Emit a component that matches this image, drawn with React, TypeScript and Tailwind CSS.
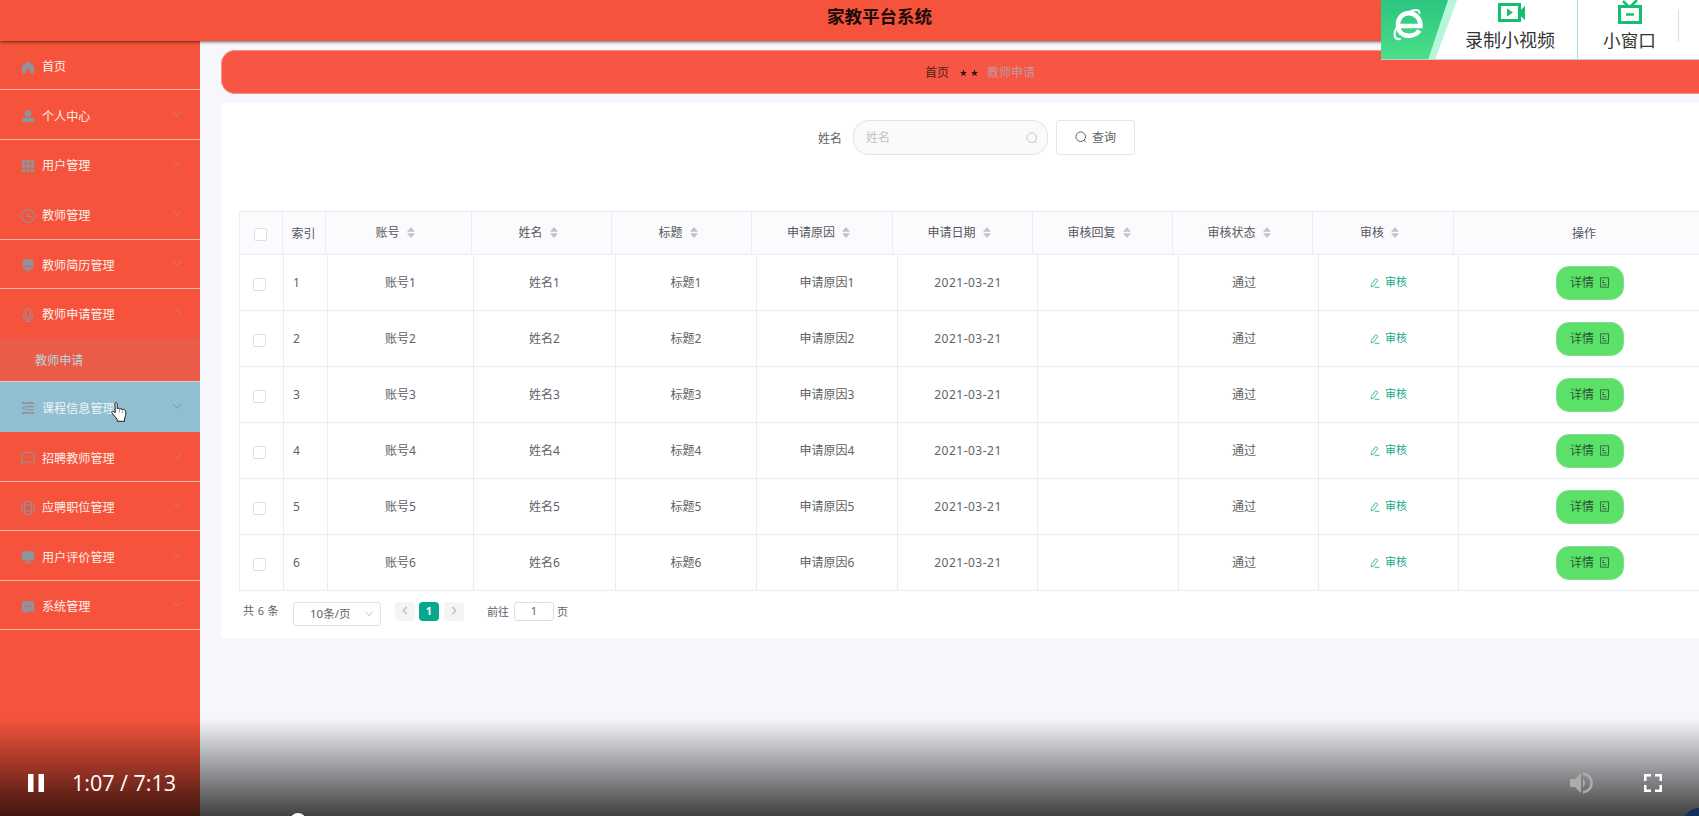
import type { ReactNode } from "react";
import clsx from "clsx";

type MenuItem = {
  label: string;
  icon: ReactNode;
  height: string;
  line?: boolean;
  arrow?: "down" | "up";
  active?: boolean;
};

const icons = {
  home: <path fill="currentColor" d="M8 1 1 7v8h5v-5h4v5h5V7z" />,
  user: (
    <path fill="currentColor" d="M8 1a4 4 0 1 1 0 8 4 4 0 0 1 0-8zM1 15v-2q0-3 3-3h8q3 0 3 3v2z" />
  ),
  grid: (
    <path
      fill="currentColor"
      d="M1 1h4v4H1zM6 1h4v4H6zM11 1h4v4h-4zM1 6h4v4H1zM6 6h4v4H6zM11 6h4v4h-4zM1 11h4v4H1zM6 11h4v4H6zM11 11h4v4h-4z"
    />
  ),
  clock: (
    <g fill="none" stroke="currentColor" strokeWidth="1.2">
      <circle cx="8" cy="8" r="7.4" />
      <path d="M7.5 4v4.5H12" />
    </g>
  ),
  brush: <path fill="currentColor" d="M2 .5h12V8H2zM2 9h12v3h-4L8 15.500 6 12H2z" />,
  mic: (
    <g fill="none" stroke="currentColor" strokeWidth="1.2">
      <rect x="5" y=".8" width="6" height="10" rx="3" />
      <path d="M3 6v3c0 6 10 6 10 0V6M8 13.500v2M5 15.400h6" />
    </g>
  ),
  fold: (
    <path
      fill="currentColor"
      d="M1 1.500h14v2H1zM6 5.500h9v1.500H6zM6 9h9v1.500H6zM1 12.500h14v2H1zM1 8l3.500-2.500v5z"
    />
  ),
  chat: (
    <g fill="none" stroke="currentColor" strokeWidth="1.2">
      <path d="M1 1.800h14v11H4.500L1 15z" />
      <path strokeDasharray="1.500 1.500" d="M4.500 7.200h7.500" />
    </g>
  ),
  help: (
    <g fill="none" stroke="currentColor" strokeWidth="1.2">
      <circle cx="8" cy="8" r="7.4" />
      <circle cx="8" cy="8" r="4.200" />
      <path d="M4 2v4M12 2v4M4 14v-4M12 14v-4" />
    </g>
  ),
  screen: <path fill="currentColor" d="M1 1.500h14v10.500H1zM7 12h2v2h3v1H4v-1h3z" />,
  message: (
    <path
      fill="currentColor"
      fillRule="evenodd"
      d="M1 1.500h14V13H8l-3.500 2.500V13H1zM4 6.500v1.500h1.500V6.500zM7.200 6.500v1.500h1.500V6.500zM10.500 6.500v1.500H12V6.500z"
    />
  ),
};

const menu: MenuItem[] = [
  { label: "首页", icon: icons.home, height: "h-[49px]", line: true },
  { label: "个人中心", icon: icons.user, height: "h-[50px]", line: true, arrow: "down" },
  { label: "用户管理", icon: icons.grid, height: "h-[49px]", arrow: "down" },
  { label: "教师管理", icon: icons.clock, height: "h-[51px]", line: true, arrow: "down" },
  { label: "教师简历管理", icon: icons.brush, height: "h-[49px]", line: true, arrow: "down" },
  { label: "教师申请管理", icon: icons.mic, height: "h-[49px]", arrow: "up" },
];

const menuAfter: MenuItem[] = [
  { label: "课程信息管理", icon: icons.fold, height: "h-[50px]", arrow: "down", active: true },
  { label: "招聘教师管理", icon: icons.chat, height: "h-[50px]", line: true, arrow: "down" },
  { label: "应聘职位管理", icon: icons.help, height: "h-[49px]", line: true, arrow: "down" },
  { label: "用户评价管理", icon: icons.screen, height: "h-[50px]", line: true, arrow: "down" },
  { label: "系统管理", icon: icons.message, height: "h-[49px]", line: true, arrow: "down" },
];

const columns = [
  { label: "账号", head: "w-[146px]" },
  { label: "姓名", head: "w-[140px]" },
  { label: "标题", head: "w-[140px]" },
  { label: "申请原因", head: "w-[141px]" },
  { label: "申请日期", head: "w-[140px]" },
  { label: "审核回复", head: "w-[140px]" },
  { label: "审核状态", head: "w-[140px]" },
  { label: "审核", head: "w-[141px]" },
];

const rows = [1, 2, 3, 4, 5, 6];

function SideItem({ item }: { item: MenuItem }) {
  return (
    <li
      className={clsx(
        "flex shrink-0 items-center border-b pl-[21px] pr-[18px]",
        item.height,
        item.line ? "border-[#fbb5a8]" : "border-transparent",
        item.active ? "bg-[#8fbfd0] text-[#eef4f7]" : "text-[#fff0ea]",
      )}
    >
      <svg viewBox="0 0 16 16" className="mt-[3px] size-3.5 text-[#909399]">
        {item.icon}
      </svg>
      <span className="ml-[7px] mt-1 text-[12.1px] leading-4">{item.label}</span>
      {item.arrow ? (
        <svg
          viewBox="0 0 10 6"
          className={clsx("-mt-0.5 ml-auto h-1.5 w-2.5", item.arrow === "up" && "rotate-180")}
        >
          <path
            d="M.7.8 5 5 9.300.8"
            fill="none"
            className={item.active ? "stroke-[#8296a2]" : "stroke-[#c08079]"}
          />
        </svg>
      ) : null}
    </li>
  );
}

function SearchIcon({ className }: { className: string }) {
  return (
    <svg viewBox="0 0 12 12" className={className} fill="none" stroke="currentColor">
      <circle cx="5.700" cy="5.700" r="4.800" />
      <path d="m9 9.200 2 2" />
    </svg>
  );
}

function SortIcon() {
  return (
    <svg viewBox="0 0 8 11" className="-mt-0.5 ml-[7px] h-[11px] w-2 fill-[#c0c4cc]">
      <path d="M4 0 8 4.800H0zM4 11 0 6.200h8z" />
    </svg>
  );
}

function Checkbox({ className }: { className?: string }) {
  return (
    <span className={clsx("block size-[13px] rounded-[2px] border border-[#dcdfe6] bg-white", className)} />
  );
}

function Cell({ width, children }: { width: string; children?: ReactNode }) {
  return (
    <div className={clsx("flex h-full shrink-0 items-center justify-center border-r border-[#ebebf4]", width)}>
      {children}
    </div>
  );
}

function Sidebar() {
  return (
    <aside className="w-[200px] shrink-0 bg-[#f5533b]">
      <ul className="flex flex-col">
        {menu.map((item) => (
          <SideItem key={item.label} item={item} />
        ))}
        <li className="flex h-11 items-center border-b border-[#f3c6bb] bg-[#ea5c48] pl-[35px] pt-[3px] text-[12.1px] text-[#b4d8dc]">
          教师申请
        </li>
        {menuAfter.map((item) => (
          <SideItem key={item.label} item={item} />
        ))}
      </ul>
    </aside>
  );
}

function SearchBar() {
  return (
    <div className="flex h-[35px] items-center pl-[597px] text-xs text-[#606266]">
      <span className="mt-0.5 w-[35px]">姓名</span>
      <div className="flex h-[35px] w-[195px] items-center justify-between rounded-[15px] border border-[#e2e2e4] bg-[#fafafa] pl-3 pr-[9px] text-[#c0c4cc]">
        <span>姓名</span>
        <SearchIcon className="size-3" />
      </div>
      <button
        type="button"
        className="ml-2 flex h-[35px] w-[79px] items-center justify-center rounded-[3px] border border-[#e4e4ec] bg-white"
      >
        <SearchIcon className="-mt-0.5 mr-[5px] size-3" />
        查询
      </button>
    </div>
  );
}

function ApplyTable() {
  return (
    <div className="w-[1484px] border-l border-[#ebebf4] text-xs text-[#606266]">
      <div className="flex h-11 w-[1484px] border-y border-[#ebebf4] bg-[#fbfbfd] text-[#55575c]">
        <Cell width="w-[43px]">
          <Checkbox className="-ml-px mt-0.5" />
        </Cell>
        <Cell width="w-[43px]">
          <span className="-ml-px mt-0.5">索引</span>
        </Cell>
        {columns.map((col) => (
          <Cell key={col.label} width={col.head}>
            <span className="-ml-[7px]">{col.label}</span>
            <SortIcon />
          </Cell>
        ))}
        <Cell width="w-[262px]">
          <span className="-ml-px mt-0.5">操作</span>
        </Cell>
      </div>
      {rows.map((n) => (
        <div key={n} className="flex h-14 border-b border-[#ebebf4]">
          <Cell width="w-[44px]">
            <Checkbox className="-ml-1 mt-[3px]" />
          </Cell>
          <div className="flex w-[44px] shrink-0 items-center border-r border-[#ebebf4] pl-[9px]">{n}</div>
          <Cell width="w-[146px]">账号{n}</Cell>
          <Cell width="w-[142px]">姓名{n}</Cell>
          <Cell width="w-[141px]">标题{n}</Cell>
          <Cell width="w-[141px]">申请原因{n}</Cell>
          <Cell width="w-[140px]">
            <span className="ml-px tracking-[0.5px]">2021-03-21</span>
          </Cell>
          <Cell width="w-[141px]" />
          <Cell width="w-[140px]">
            <span className="-ml-[9px]">通过</span>
          </Cell>
          <Cell width="w-[140px]">
            <svg
              viewBox="0 0 11 11"
              className="mr-[5px] size-2.5 text-[#2fb39c]"
              fill="none"
              stroke="currentColor"
            >
              <path d="M6.200.8 8.600 2.500 4.200 8.800 1.300 10l.4-3zM5 10.200h5.500" />
            </svg>
            <span className="text-[11px] text-[#16a68d]">审核</span>
          </Cell>
          <Cell width="w-[263px]">
            <button
              type="button"
              className="flex h-[34px] w-[68px] items-center justify-center rounded-[13px] border border-[#83dd8e] bg-[#5be069] text-[#29562f]"
            >
              <span className="-ml-px">详情</span>
              <svg viewBox="0 0 10 12" className="ml-1.5 h-[11px] w-[9px]" fill="none" stroke="currentColor">
                <path d="M.5.800h9v10.400h-9zM2.500 4h2M2.500 6h3M2.500 8.500h5" strokeWidth=".9" />
              </svg>
            </button>
          </Cell>
        </div>
      ))}
    </div>
  );
}

function Pagination() {
  return (
    <div className="mt-[11px] flex items-start pl-1 text-[11px] text-[#606266]">
      <span className="w-[50px] whitespace-nowrap leading-[18px] tracking-[0.4px]">共 6 条</span>
      <div className="flex h-6 w-[88px] items-center justify-between rounded-[3px] border border-[#dfe1e8] pl-4 pr-[7px] text-[11.5px]">
        <span>10条/页</span>
        <svg viewBox="0 0 8 6" className="h-1.5 w-2 stroke-[#c0c4cc]" fill="none">
          <path d="m.5.800 3.500 4 3.500-4" />
        </svg>
      </div>
      <span className="ml-3.5 flex h-[19px] w-5 items-center justify-center rounded-sm bg-[#f4f4f5]">
        <svg viewBox="0 0 6 10" className="-mt-0.5 h-[9px] w-1.5 stroke-[#b4b8c0]" fill="none" strokeWidth="1.300">
          <path d="M5 1 1 5l4 4" />
        </svg>
      </span>
      <span className="ml-1 flex h-[19px] w-5 items-center justify-center rounded-sm bg-[#04a98b] font-bold text-white">
        1
      </span>
      <span className="ml-[5px] flex h-[19px] w-5 items-center justify-center rounded-sm bg-[#f4f4f5]">
        <svg viewBox="0 0 6 10" className="-mt-0.5 h-[9px] w-1.5 stroke-[#b4b8c0]" fill="none" strokeWidth="1.300">
          <path d="m1 1 4 4-4 4" />
        </svg>
      </span>
      <span className="ml-[23px] w-[27px] leading-[19px]">前往</span>
      <span className="flex h-[19px] w-10 items-center justify-center rounded-[3px] border border-[#dcdfe6]">1</span>
      <span className="ml-[3px] leading-[19px]">页</span>
    </div>
  );
}

function RecorderBar() {
  return (
    <div className="absolute right-0 top-0 z-20 flex h-[60px] w-[318px] overflow-hidden border-b border-[#c9cdd0] bg-white text-[#333]">
      <svg viewBox="0 0 76 60" className="h-[60px] w-[76px] shrink-0">
        <defs>
          <linearGradient id="rec" x1="0" y1="0" x2="0" y2="1">
            <stop offset="0" stopColor="#2cc580" />
            <stop offset="1" stopColor="#4bdf88" />
          </linearGradient>
        </defs>
        <path d="M66 0h10L54 60H44z" fill="#b4f7dc" />
        <path d="M0 0h67L47 60H0z" fill="url(#rec)" />
        <g fill="none" stroke="#fff">
          <path d="M17 26h22.500C39 9 17 9 17 25c0 13.500 16.500 13 21.500 5.500" strokeWidth="4.600" />
          <path d="M38.500 13c0-4-6-4-12 0M16 27c-4 7-3 13 3 12" strokeWidth="2" strokeLinecap="round" />
        </g>
      </svg>
      <div className="flex w-[121px] shrink-0 flex-col items-center border-r border-[#a8e8c4]">
        <svg viewBox="0 0 28 20" className="mr-[11px] mt-[3px] h-5 w-7" fill="none" stroke="#14c070" strokeWidth="3">
          <path d="M1.500 1.500h20v16h-20z" />
          <path d="M9 5.500v8l6-4z" fill="#14c070" stroke="none" />
          <path d="M22 7.500 27 3v14l-5-4.500z" fill="#14c070" stroke="none" />
        </svg>
        <span className="mr-3.5 mt-0.5 whitespace-nowrap text-lg leading-[30px]">录制小视频</span>
      </div>
      <div className="flex w-[100px] shrink-0 flex-col items-center">
        <svg viewBox="0 0 24 24" className="ml-[3px] h-6 w-6" fill="none" stroke="#14c070" strokeWidth="3">
          <path d="M1.500 6.500h21v16h-21z" />
          <path d="M8 14.500h8M5 1l5 5M19 0l-6 6" strokeWidth="2.500" />
        </svg>
        <span className="ml-[3px] mt-px whitespace-nowrap text-[17.600px] leading-[30px]">小窗口</span>
      </div>
      <span className="mt-[9px] h-[33px] w-px bg-[#dcdcdc]" />
    </div>
  );
}

function PlayerControls() {
  return (
    <div className="absolute inset-x-0 bottom-0 flex h-[98px] items-center overflow-hidden bg-linear-to-b from-black/0 to-black/74 pl-7 pr-[37px] pt-[32px]">
      <svg viewBox="0 0 16 18" className="h-[18px] w-4 fill-white">
        <path d="M0 0h5.500v18H0zM10.500 0H16v18h-5.500z" />
      </svg>
      <span className="ml-7 whitespace-nowrap font-['Open_Sans'] text-[21.500px] leading-7 text-white">
        1:07 / 7:13
      </span>
      <svg viewBox="0 0 24 22" className="ml-auto h-[22px] w-6 text-[#acacac]">
        <path d="M1 7h5l6-6v20l-6-6H1z" fill="currentColor" />
        <path d="M14 6.500q4 4.500 0 9z" fill="currentColor" />
        <path d="M14 1.500c11.500 3 11.500 16 0 19" fill="none" stroke="currentColor" strokeWidth="2.500" />
      </svg>
      <svg viewBox="0 0 18 18" className="ml-[51px] size-[18px]" fill="none" stroke="#fff" strokeWidth="2.500">
        <path d="M1.250 7V1.250H7M11 1.250h5.750V7M16.750 11v5.750H11M7 16.750H1.250V11" />
      </svg>
      <span className="absolute left-[290px] top-[95px] size-4 rounded-full bg-white" />
      <span className="absolute left-[1682px] top-[90px] size-9 rounded-full bg-[#12305a]" />
    </div>
  );
}

export default function App() {
  return (
    <div className="relative flex h-[816px] w-[1699px] flex-col overflow-hidden bg-[#f6f7fc] font-['Noto_Sans','Noto_Sans_CJK_SC',sans-serif]">
      <header className="z-10 flex h-[41px] shrink-0 justify-center bg-[#f5533b] pl-[62px] shadow-[0_1px_3px_rgba(0,0,0,0.6)]">
        <h1 className="-ml-0.5 mt-1 text-[17.500px] font-bold leading-[25px] text-[#1c0b08]">家教平台系统</h1>
      </header>

      <div className="flex min-h-0 flex-1">
        <Sidebar />
        <main className="min-w-0 flex-1 overflow-hidden pl-[21px] pt-[9px]">
          <div className="flex h-11 items-center rounded-l-[14px] border border-r-0 border-[#fa8f80] bg-[#f65643] pl-[703px] pt-0.5 text-xs">
            <span className="text-[#4a2420]">首页</span>
            <svg viewBox="0 0 18 8" className="ml-[11px] mr-[9px] h-2 w-[18px] fill-[#2c1512]">
              <path d="m3.500.500.9 2.400h2.600L5 4.500l.7 2.700-2.200-1.600-2.200 1.600.7-2.700L0 2.900h2.600zM14.500.500l.9 2.400H18l-2 1.600.7 2.700-2.200-1.600-2.200 1.600.7-2.700-2-1.600h2.600z" />
            </svg>
            <span className="text-[#c29a9f]">教师申请</span>
          </div>

          <section className="mt-[9px] h-[535px] overflow-hidden bg-white pt-[17px]">
            <SearchBar />
            <div className="mt-14 pl-[18px]">
              <ApplyTable />
              <Pagination />
            </div>
          </section>
        </main>
      </div>

      <RecorderBar />
      <PlayerControls />

      {/* hand pointer over the hovered menu entry */}
      <svg viewBox="0 0 16 20" className="absolute left-[111px] top-[402px] h-5 w-4">
        <path
          d="M4 1.500c0-1.300 2.200-1.300 2.200 0V7c.5-1.200 2.300-1 2.500.3.500-1 2.200-.8 2.500.5.700-.9 2.600-.6 3.100.9.800 1.600.8 4-.2 6.300L13.500 17v2.300H6.200V17.500C4.500 15.500 3 13 1 11c-.8-1.300.8-2.200 2-1.200l1.200 1z"
          fill="#fff"
          stroke="#222"
          strokeLinejoin="round"
        />
        <path d="M8.500 8v2.500M11.300 8.500v2.500" stroke="#777" strokeWidth=".7" />
      </svg>
    </div>
  );
}
